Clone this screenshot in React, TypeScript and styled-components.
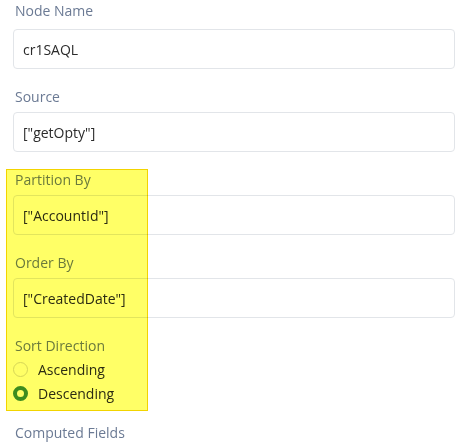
import React from 'react';
import styled, {createGlobalStyle} from "styled-components";

const fields = [
    {label: 'Node Name', value: 'cr1SAQL'},
    {label: 'Source', value: '["getOpty"]'},
    {label: 'Partition By', value: '["AccountId"]'},
    {label: 'Order By', value: '["CreatedDate"]'},
];

const directions = [
    {label: 'Ascending', checked: false},
    {label: 'Descending', checked: true},
];

export default function App() {
    return (
        <>
            <GlobalStyle/>
            <Page>
                {fields.map((field, i) => (
                    <Field key={field.label}>
                        <Label $first={i === 0}>{field.label}</Label>
                        <Input readOnly value={field.value}/>
                    </Field>
                ))}
                <Field>
                    <Label $gap={0}>Sort Direction</Label>
                    {directions.map((d) => (
                        <RadioRow key={d.label}>
                            <Radio $checked={d.checked}/>
                            <RadioText>{d.label}</RadioText>
                        </RadioRow>
                    ))}
                </Field>
                <Label>Computed Fields</Label>
                <Highlight/>
            </Page>
        </>
    );
}

const GlobalStyle = createGlobalStyle`
    html, body {
        margin: 0;
        background: #fff;
        overflow: hidden;
    }
    body {
        font-family: "Open Sans", "Noto Sans", sans-serif;
    }
`;

const Page = styled.div`
    position: relative;
    width: 461px;
    height: 444px;
    box-sizing: border-box;
    padding: 0 6px 0 13px;
    display: flex;
    flex-direction: column;
`;

const Field = styled.div`
    display: flex;
    flex-direction: column;
    margin-bottom: 16px;
`;

const Label = styled.div<{$first?: boolean; $gap?: number}>`
    color: #6b7a94;
    font-size: 14px;
    line-height: 22px;
    padding: 1px 0 0 2px;
    margin-top: ${p => p.$first ? '-1px' : '0'};
    margin-bottom: ${p => p.$first ? 7 : p.$gap ?? 4}px;
`;

const Input = styled.input`
    box-sizing: border-box;
    height: 40px;
    width: 100%;
    border: 1px solid #e2e5e9;
    border-radius: 4px;
    padding: 0 9px;
    font-family: inherit;
    font-size: 14px;
    color: #2b2b2b;
    background: #fff;
    outline: none;
`;

const RadioRow = styled.div`
    display: flex;
    align-items: center;
    height: 24px;
    gap: 10px;
`;

const Radio = styled.span<{$checked: boolean}>`
    box-sizing: border-box;
    width: 15px;
    height: 15px;
    border-radius: 50%;
    background: #fff;
    border: ${p => p.$checked ? '4px solid #3d8c4b' : '1px solid #d6d6d6'};
`;

const RadioText = styled.span`
    font-size: 14px;
    color: #2b2b2b;
`;

const Highlight = styled.div`
    position: absolute;
    left: 6px;
    top: 169px;
    width: 142px;
    height: 242px;
    box-sizing: border-box;
    border: 1.5px solid #f2d400;
    background: #ffff66;
    mix-blend-mode: multiply;
    pointer-events: none;
`;
